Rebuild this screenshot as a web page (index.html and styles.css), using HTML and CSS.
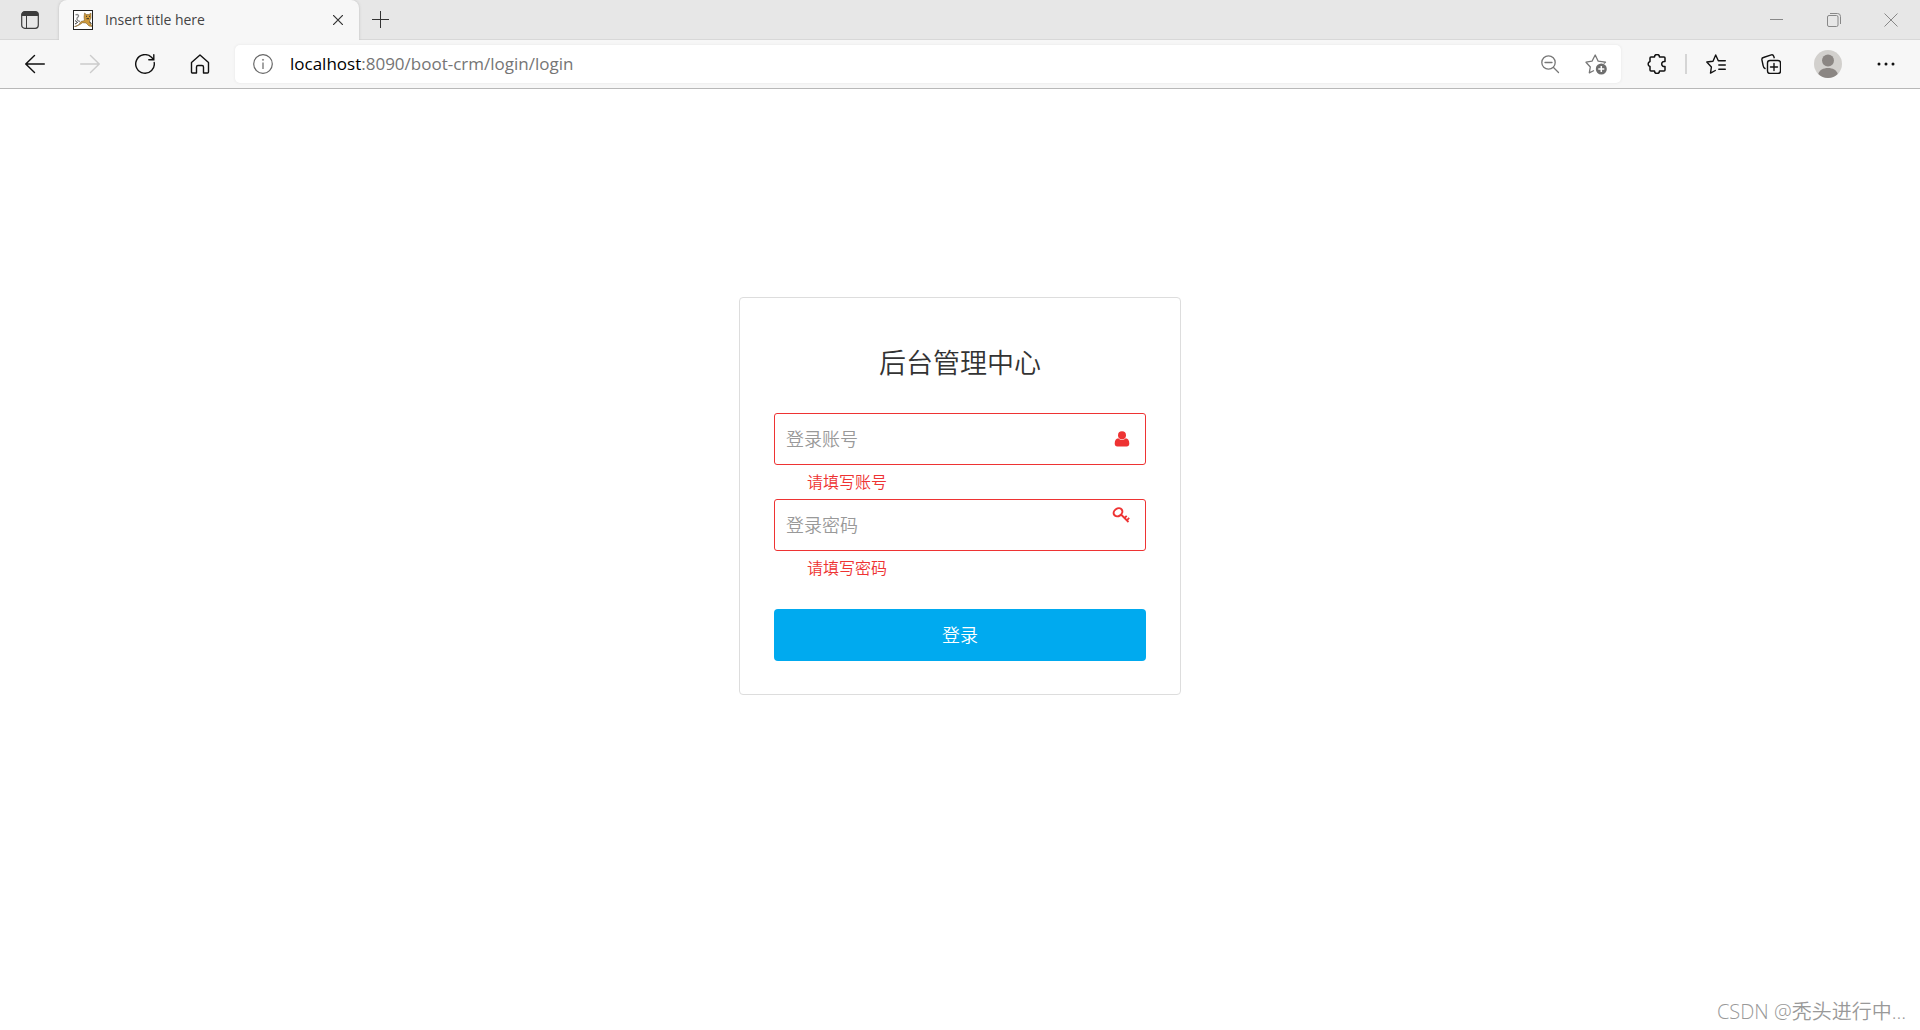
FILE: index.html
```html
<!DOCTYPE html>
<html lang="zh-CN">
<head>
  <meta charset="UTF-8">
  <meta name="viewport" content="width=device-width, initial-scale=1.0">
  <title>Insert title here</title>
  <link rel="stylesheet" href="styles.css">
</head>
<body>

  <header class="browser">
    <div class="tabStrip">
      <button class="tabMenu" type="button" aria-label="Tab actions">
        <svg width="18" height="18" viewBox="0 0 18 18" fill="none" stroke="#3c3c3c">
          <rect x="0.7" y="0.7" width="16.6" height="16.6" rx="3" stroke-width="1.2"/>
          <path d="M1 4.500V3.500a2.500 2.500 0 0 1 2.500-2.500h11a2.500 2.500 0 0 1 2.500 2.500V4.500z" fill="#3c3c3c"/>
          <path d="M5.500 5v12"/>
        </svg>
      </button>
      <div class="tab">
        <svg class="favicon" width="20" height="20" viewBox="0 0 20 20">
          <rect x="0.5" y="0.5" width="19" height="19" fill="#fff" stroke="#222"/>
          <path d="M1.500 16.500l4-1.500 2.500-3.500 3.500-1L11 7l.5-4 2 1.500h2.500l2-1.500v5l-1.500 3 .5 1.500 2 4-3-.5-3-3-3.500-.3-2.500 1.800-4 2z" fill="#cf9a3c" stroke="#6b4f20" stroke-width=".5"/>
          <path d="M7 11.500C3 11 3.500 8 5 7S5 3.500 2.500 5" fill="none" stroke="#888" stroke-width="1.3"/>
          <path d="M2 10.500l2.500 2L2 14M16.500 12l2 1.500M13 6.300h1M16 6.300h1M13.500 8.700h2.500" fill="none" stroke="#222" stroke-width=".9"/>
        </svg>
        <span class="tabTitle">Insert title here</span>
        <button class="tabClose" type="button" aria-label="Close tab">
          <svg width="10" height="10" viewBox="0 0 10 10" stroke="#333" stroke-width="1.2"><path d="M0 0l10 10M10 0L0 10"/></svg>
        </button>
      </div>
      <button class="newTab" type="button" aria-label="New tab">
        <svg width="17" height="17" viewBox="0 0 17 17" stroke="#333"><path d="M8.500 0v17M0 8.500h17"/></svg>
      </button>
      <div class="windowButtons">
        <button type="button" aria-label="Minimize">
          <svg width="14" height="14" viewBox="0 0 14 14" stroke="#888"><path d="M0 6.500h13"/></svg>
        </button>
        <button type="button" aria-label="Restore">
          <svg width="14" height="14" viewBox="0 0 14 14" fill="none" stroke="#888"><rect x="0.5" y="2.5" width="10.5" height="11" rx="1.5"/><path d="M3 .5h7.500a3 3 0 0 1 3 3V11"/></svg>
        </button>
        <button type="button" aria-label="Close">
          <svg width="14" height="14" viewBox="0 0 14 14" stroke="#888"><path d="M.5.500l13 13M13.500.500l-13 13"/></svg>
        </button>
      </div>
    </div>

    <div class="toolbar">
      <button type="button" aria-label="Back">
        <svg width="20" height="20" viewBox="0 0 20 20" fill="none" stroke="#111" stroke-width="1.4" stroke-linecap="round"><path d="M19.300 10H1M9.500 1.500L.8 10l8.700 8.500"/></svg>
      </button>
      <button type="button" aria-label="Forward" disabled>
        <svg width="20" height="20" viewBox="0 0 20 20" fill="none" stroke="#ccc" stroke-width="1.4" stroke-linecap="round"><path d="M.7 10H19M10.500 1.500l8.700 8.500-8.700 8.500"/></svg>
      </button>
      <button type="button" aria-label="Refresh">
        <svg width="20" height="20" viewBox="0 0 20 20" fill="none" stroke="#111" stroke-width="1.4" stroke-linecap="round"><path d="M19.200 8.500A9.300 9.300 0 1 1 16.500 3.300L18.500 5.500M18.800.8v5h-5"/></svg>
      </button>
      <button type="button" aria-label="Home">
        <svg width="20" height="20" viewBox="0 0 20 20" fill="none" stroke="#111" stroke-width="1.4" stroke-linejoin="round"><path d="M1.500 8.500L10 1l8.500 7.500V18a1 1 0 0 1-1 1h-4v-6a1.500 1.500 0 0 0-1.500-1.500H8A1.500 1.500 0 0 0 6.500 13v6h-4a1 1 0 0 1-1-1z"/></svg>
      </button>

      <div class="addressBar">
        <svg width="20" height="20" viewBox="0 0 20 20" fill="none" stroke="#666" stroke-width="1.2"><circle cx="10" cy="10" r="9.3"/><path d="M10 8.500V15"/><circle cx="10" cy="5.800" r=".6" fill="#666" stroke-width=".6"/></svg>
        <label for="url">localhost</label>
        <input type="text" id="url" value=":8090/boot-crm/login/login">
        <button type="button" aria-label="Zoom">
          <svg width="20" height="20" viewBox="0 0 20 20" fill="none" stroke="#777" stroke-width="1.3" stroke-linecap="round"><circle cx="8.500" cy="8.500" r="6.700"/><path d="M13.500 13.500l5 5M5 8.500h7"/></svg>
        </button>
        <button type="button" aria-label="Add to favorites">
          <svg width="22" height="22" viewBox="0 0 22 22" fill="none" stroke="#777" stroke-width="1.3" stroke-linejoin="round"><path d="M9 17.500l-4.700 2.300L5.300 14 1 9.200l6-1 3.200-6.200 3 6.200 7.300 1-1.800 1.300"/><circle cx="16.300" cy="16" r="5.500" fill="#6e6e6e" stroke="none"/><path d="M16.300 13v6M13.300 16h6" stroke="#fff" stroke-width="1.5"/></svg>
        </button>
      </div>

      <button type="button" aria-label="Extensions">
        <svg width="20" height="20" viewBox="0 0 20 20" fill="none" stroke="#111" stroke-width="1.5" stroke-linejoin="round"><path d="M4 3h3.500a2.500 2.500 0 0 1 5 0H17a1 1 0 0 1 1 1v3.500a2.600 2.600 0 1 0 0 5V16a1 1 0 0 1-1 1h-4.500a2.500 2.500 0 0 1-5 0H4a1 1 0 0 1-1-1v-3.500a2.600 2.600 0 0 1 0-5V4a1 1 0 0 1 1-1z"/></svg>
      </button>
      <span class="divider"></span>
      <button type="button" aria-label="Favorites">
        <svg width="20" height="20" viewBox="0 0 20 20" fill="none" stroke="#111" stroke-width="1.4" stroke-linecap="round" stroke-linejoin="round"><path d="M9.300 16.500l-4.800 2.600.9-6.100L.8 8l6.200-.8L9.700 1l2.600 5.700H19.300M12.800 11h6.500M12.800 15.300h6.500"/></svg>
      </button>
      <button type="button" aria-label="Collections">
        <svg width="20" height="20" viewBox="0 0 20 20" fill="none" stroke="#111" stroke-width="1.4" stroke-linecap="round" stroke-linejoin="round"><rect x="6.500" y="6.500" width="13" height="13" rx="2.5"/><path d="M13 9.500v7M9.500 13h7M4 14.500C2.500 14 2.300 12.500 2 11L.9 5.800a2 2 0 0 1 1.500-2.300L10.300.9a2 2 0 0 1 2.400 1.300l.5 1.500"/></svg>
      </button>
      <button class="profile" type="button" aria-label="Profile">
        <svg width="28" height="28" viewBox="0 0 28 28"><circle cx="14" cy="14" r="14" fill="#d2d0cd"/><circle cx="14" cy="10.500" r="6" fill="#8b8683"/><path d="M4.300 24c1-4 5-6 9.700-6s8.700 2 9.700 6A14 14 0 0 1 4.300 24z" fill="#8b8683"/></svg>
      </button>
      <button type="button" aria-label="Settings and more">
        <svg width="18" height="4" viewBox="0 0 18 4" fill="#111"><circle cx="2" cy="2" r="1.5"/><circle cx="9" cy="2" r="1.5"/><circle cx="16" cy="2" r="1.5"/></svg>
      </button>
    </div>
  </header>

  <main>
    <form class="loginBox">
      <h1>后台管理中心</h1>
      <div class="field">
        <input type="text" id="username" placeholder="登录账号" aria-label="登录账号">
        <svg class="userIcon" width="16" height="16" viewBox="0 0 16 16" fill="#e33"><circle cx="8" cy="4.300" r="4"/><path d="M4.300 7.200C2 7.400.7 9.500.7 12.500c0 2 1 3 2.600 3h9.400c1.600 0 2.600-1 2.600-3 0-3-1.300-5.100-3.600-5.300-2 2-5.400 2-7.400 0z"/></svg>
        <label for="username">请填写账号</label>
      </div>
      <div class="field">
        <input type="password" id="password" placeholder="登录密码" aria-label="登录密码">
        <svg class="keyIcon" width="18" height="16" viewBox="0 0 18 16" fill="none" stroke="#e33" stroke-width="2"><ellipse cx="6" cy="5.300" rx="4.600" ry="3.700" transform="rotate(-35 6 5.300)"/><path d="M9 7.500l7.500 7.500M12.500 11l2.200-2.200M14.800 13.300l2.400-2.400" stroke-width="1.8"/></svg>
        <label for="password">请填写密码</label>
      </div>
      <button class="loginButton" type="button">登录</button>
    </form>
  </main>

  <footer>CSDN @秃头进行中…</footer>

</body>
</html>
```
FILE: styles.css
```css
* {
  box-sizing: border-box;
}

body {
  margin: 0;
  min-height: 100vh;
  display: flex;
  flex-direction: column;
  background-color: #fff;
  font-family: "Open Sans", "Noto Sans CJK SC", sans-serif;
}

button, input {
  padding: 0;
  border: none;
  background: none;
  font-family: inherit;
}

svg {
  flex: none;
}

/* browser window */
.browser {
  background-color: #f7f7f7;
  border-bottom: 1px solid #b8b8b8;
}

.browser button {
  display: flex;
  align-items: center;
  justify-content: center;
}

.tabStrip {
  display: flex;
  height: 40px;
  background-color: #e7e7e7;
  box-shadow: inset 0 -1px #d8d8d8;
}

.tabMenu {
  width: 59px;
}

.tab {
  display: flex;
  align-items: center;
  width: 300px;
  padding: 0 16px 0 14px;
  gap: 12px;
  background-color: #f7f7f7;
  border-radius: 8px 8px 0 0;
  box-shadow: 0 0 3px #bbb;
  clip-path: inset(0 -4px);
}

.tabTitle {
  flex: 1;
  padding-bottom: 1px;
  font-size: 14px;
  color: #444;
}

.newTab {
  width: 43px;
  padding-bottom: 2px;
}

.windowButtons {
  display: flex;
  margin-left: auto;
  padding-right: 1px;
}

.windowButtons button {
  width: 57px;
}

.toolbar {
  display: flex;
  align-items: center;
  height: 48px;
  padding: 0 7px;
}

.toolbar > button {
  width: 55px;
  height: 38px;
}

.toolbar > .profile {
  width: 60px;
}

.addressBar {
  flex: 1;
  display: flex;
  align-items: center;
  height: 38px;
  margin: 0 8px;
  padding: 0 2px 0 18px;
  background-color: #fff;
  border-radius: 5px;
  box-shadow: 0 0 3px #e4e4e4;
  font-size: 17px;
}

.addressBar label {
  margin-left: 17px;
  padding-bottom: 1px;
  color: #000;
}

.addressBar input {
  flex: 1;
  padding-bottom: 1px;
  font-size: 17px;
  color: #757575;
}

.addressBar button {
  width: 46px;
  height: 38px;
}

.divider {
  width: 2px;
  height: 20px;
  margin: 0 1px;
  background-color: #d5d5d5;
}

/* login form */
main {
  flex: 1;
  padding: 208px 20px 20px;
}

.loginBox {
  max-width: 442px;
  margin: 0 auto;
  padding: 33px 34px;
  border: 1px solid #ddd;
  border-radius: 4px;
}

.loginBox h1 {
  margin: 0 0 18px;
  line-height: 64px;
  font-size: 27px;
  font-weight: 350;
  text-align: center;
  color: #333;
}

.field {
  position: relative;
}

.field input {
  display: block;
  width: 100%;
  height: 52px;
  padding: 0 50px 0 11px;
  border: 1px solid #e33;
  border-radius: 3px;
  font-size: 18px;
  font-weight: 350;
}

.field input::placeholder {
  color: #999;
}

.field label {
  display: block;
  padding-left: 33px;
  line-height: 34px;
  font-size: 16px;
  font-weight: 350;
  color: #e33;
}

.userIcon, .keyIcon {
  position: absolute;
  top: 18px;
  right: 16px;
}

.keyIcon {
  top: 8px;
}

.loginButton {
  width: 100%;
  height: 52px;
  margin-top: 24px;
  padding-bottom: 2px;
  border-radius: 4px;
  background-color: #00aaef;
  font-size: 18px;
  font-weight: 350;
  color: #fff;
}

footer {
  padding: 0 14px 3px;
  line-height: 30px;
  font-size: 20px;
  font-weight: 350;
  text-align: right;
  color: #999;
}
```
